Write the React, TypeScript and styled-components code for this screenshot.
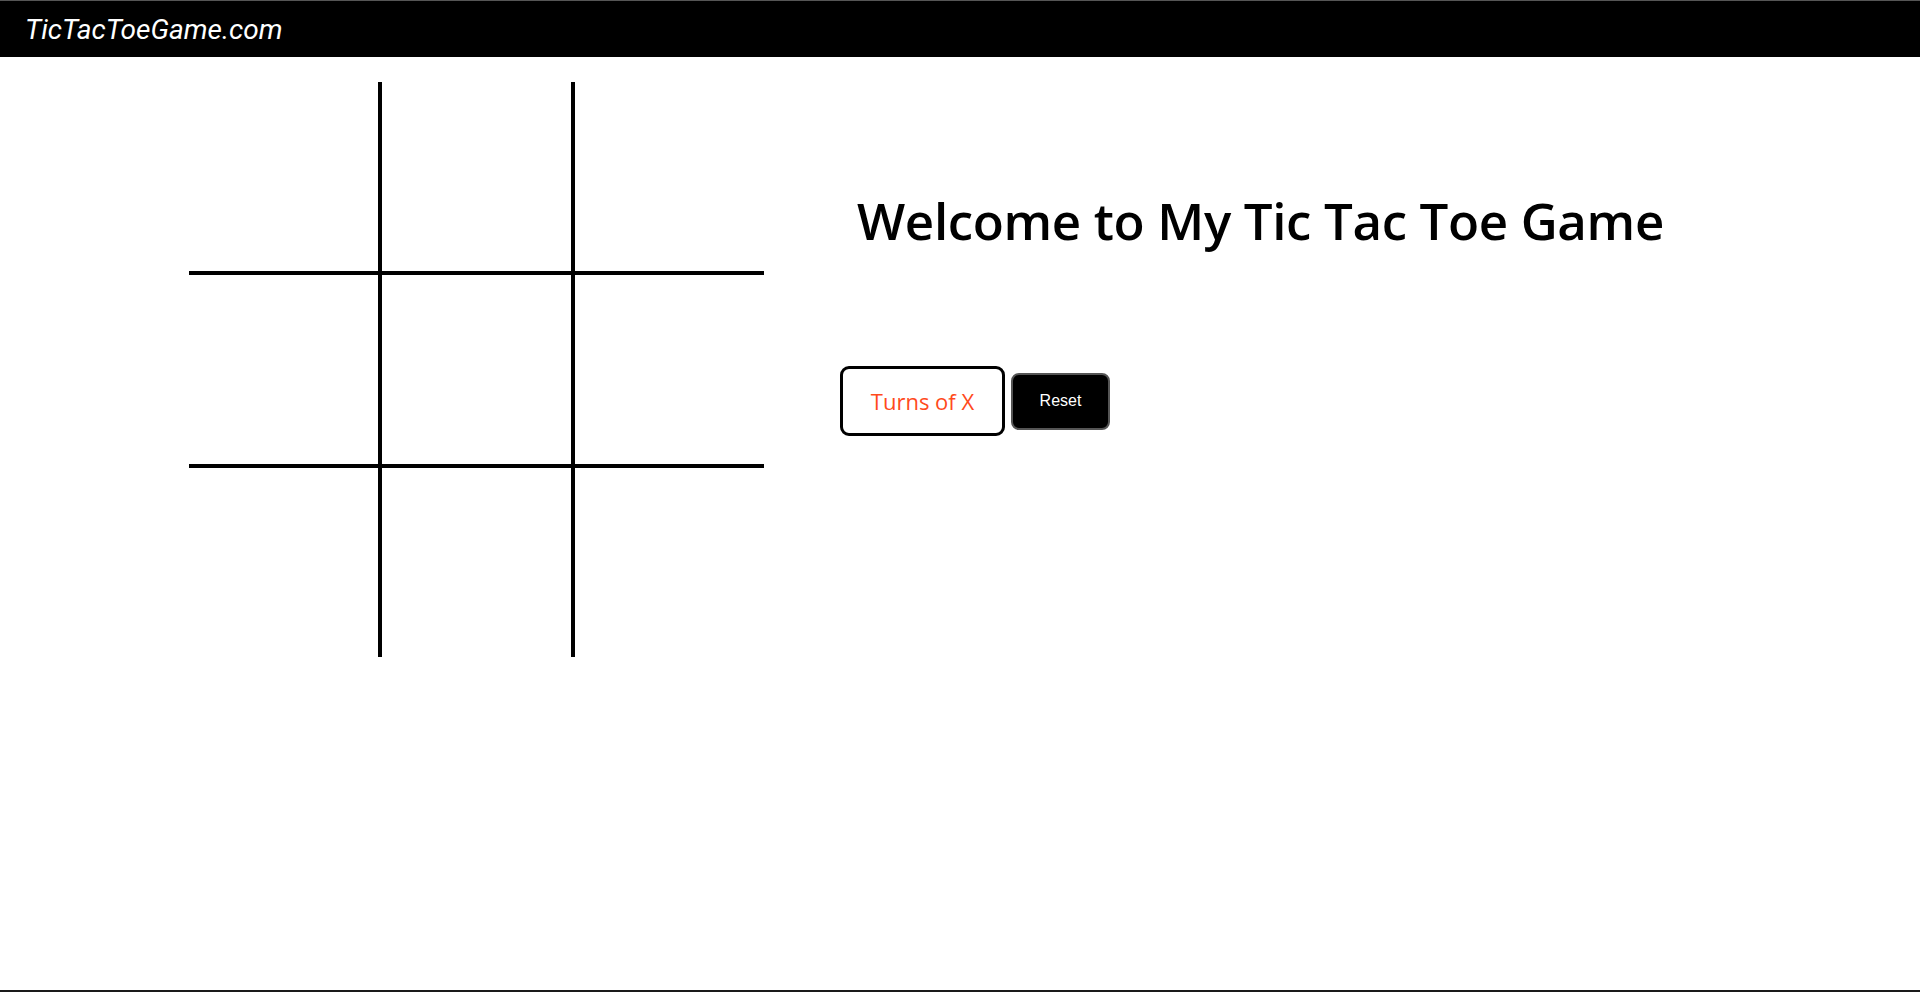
import { useState } from 'react'
import styled, { createGlobalStyle } from 'styled-components'

const GlobalStyle = createGlobalStyle`
  html, body {
    margin: 0;
    padding: 0;
    background: #fff;
  }
  #root {
    min-height: 100vh;
  }
`

function App () {
  const [cells, setCells] = useState<string[]>(Array(9).fill(''))
  const [turn, setTurn] = useState('X')

  function handleClick (i: number) {
    if (cells[i]) return
    const next = [...cells]
    next[i] = turn
    setCells(next)
    setTurn(turn === 'X' ? 'O' : 'X')
  }

  function handleReset () {
    setCells(Array(9).fill(''))
    setTurn('X')
  }

  return (
    <Page>
      <GlobalStyle />
      <NavBar>
        <Brand>TicTacToeGame.com</Brand>
      </NavBar>
      <Main>
        <Board>
          {cells.map((value, i) => (
            <Cell key={i} onClick={() => handleClick(i)}>
              {value}
            </Cell>
          ))}
        </Board>
        <Info>
          <Title>Welcome to My Tic Tac Toe Game</Title>
          <Controls>
            <TurnBox>Turns of {turn}</TurnBox>
            <ResetButton onClick={handleReset}>Reset</ResetButton>
          </Controls>
        </Info>
      </Main>
      <Footer />
    </Page>
  )
}

const Page = styled.div`
  display: flex;
  flex-direction: column;
  min-height: 100vh;
`
const NavBar = styled.nav`
  height: 56px;
  background: #000;
  border-top: 1px solid #555;
  display: flex;
  align-items: center;
  padding-left: 25px;
`
const Brand = styled.span`
  font-family: Roboto, "Liberation Sans", sans-serif;
  font-style: italic;
  font-size: 28px;
  color: #fff;
`
const Main = styled.main`
  flex: 1;
  display: flex;
  padding: 25px 0 0 189px;
`
const Board = styled.div`
  display: grid;
  grid-template-columns: repeat(3, 189px);
  grid-template-rows: repeat(3, 189px);
  gap: 4px;
  background: #000;
  align-self: flex-start;
`
const Cell = styled.div`
  background: #fff;
  display: flex;
  align-items: center;
  justify-content: center;
  font-family: "Open Sans", sans-serif;
  font-size: 96px;
  cursor: pointer;
`
const Info = styled.section`
  display: flex;
  flex-direction: column;
  padding-left: 75px;
`
const Title = styled.h1`
  margin: 108px 0 0 18px;
  font-family: "Open Sans", sans-serif;
  font-weight: 600;
  font-size: 51px;
  line-height: 60px;
  letter-spacing: -0.35px;
  color: #000;
`
const Controls = styled.div`
  display: flex;
  align-items: center;
  gap: 6px;
  margin: 116px 0 0 1px;
`
const TurnBox = styled.div`
  width: 165px;
  height: 70px;
  box-sizing: border-box;
  border: 3px solid #000;
  border-radius: 9px;
  display: flex;
  align-items: center;
  justify-content: center;
  font-family: "Open Sans", sans-serif;
  font-size: 22px;
  color: #ff4a1c;
`
const ResetButton = styled.button`
  width: 99px;
  height: 57px;
  box-sizing: border-box;
  background: #000;
  color: #fff;
  border: 2px solid #555;
  border-radius: 8px;
  font-family: "Liberation Sans", Arial, sans-serif;
  font-size: 16px;
  cursor: pointer;
`
const Footer = styled.footer`
  height: 2px;
  background: #1a1a1a;
`
export default App
